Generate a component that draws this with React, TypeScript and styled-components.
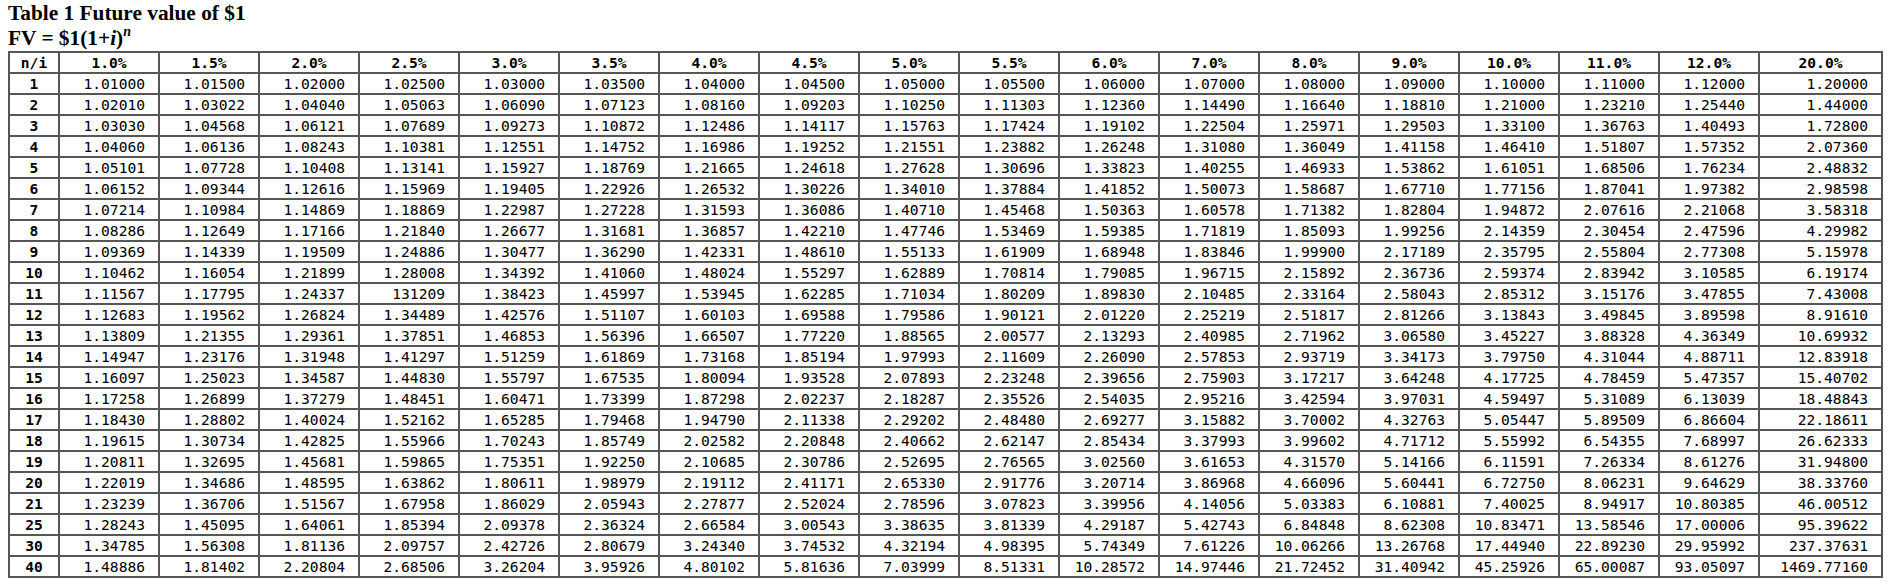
import React from "react";
import styled, { createGlobalStyle } from "styled-components";

const GlobalStyle = createGlobalStyle`
  html, body { margin: 0; padding: 0; background: #ffffff; }
  body { color: #000000; }
`;

const Page = styled.div`
  padding: 0 8px 0 8px;
`;

const Title = styled.div`
  font-family: "Liberation Serif", "Times New Roman", serif;
  font-weight: bold;
  font-size: 21.33px;
  line-height: 24px;
  padding-top: 1px;
`;

const Formula = styled.div`
  font-family: "Liberation Serif", "Times New Roman", serif;
  font-weight: bold;
  font-size: 21.33px;
  line-height: 26px;
  height: 26px;
`;

const Ital = styled.i`
  font-style: italic;
`;

const Sup = styled.sup`
  font-style: italic;
  font-size: 14px;
  line-height: 0;
  vertical-align: 9px;
`;

const Table = styled.table`
  border-collapse: collapse;
  table-layout: fixed;
  width: 1873px;
  font-family: "DejaVu Sans Mono", "Liberation Mono", monospace;
  font-size: 14.6px;
  color: #000000;
`;

const Col = styled.col<{ $w: number }>`
  width: ${(p) => p.$w}px;
`;

const HeadCell = styled.th`
  border: 2px solid #565656;
  font-weight: bold;
  text-align: center;
  padding: 0;
  height: 19px;
  line-height: 19px;
  white-space: nowrap;
`;

const RowHead = styled.td`
  border: 2px solid #565656;
  font-weight: bold;
  text-align: center;
  padding: 0;
  height: 19px;
  line-height: 19px;
`;

const Cell = styled.td`
  border: 2px solid #565656;
  text-align: right;
  padding: 0 13px 0 0;
  height: 19px;
  line-height: 19px;
  white-space: nowrap;
`;

const headers = [
  "1.0%", "1.5%", "2.0%", "2.5%", "3.0%", "3.5%", "4.0%", "4.5%", "5.0%",
  "5.5%", "6.0%", "7.0%", "8.0%", "9.0%", "10.0%", "11.0%", "12.0%", "20.0%",
];

const rows: [string, string][] = [
  ["1", "1.01000 1.01500 1.02000 1.02500 1.03000 1.03500 1.04000 1.04500 1.05000 1.05500 1.06000 1.07000 1.08000 1.09000 1.10000 1.11000 1.12000 1.20000"],
  ["2", "1.02010 1.03022 1.04040 1.05063 1.06090 1.07123 1.08160 1.09203 1.10250 1.11303 1.12360 1.14490 1.16640 1.18810 1.21000 1.23210 1.25440 1.44000"],
  ["3", "1.03030 1.04568 1.06121 1.07689 1.09273 1.10872 1.12486 1.14117 1.15763 1.17424 1.19102 1.22504 1.25971 1.29503 1.33100 1.36763 1.40493 1.72800"],
  ["4", "1.04060 1.06136 1.08243 1.10381 1.12551 1.14752 1.16986 1.19252 1.21551 1.23882 1.26248 1.31080 1.36049 1.41158 1.46410 1.51807 1.57352 2.07360"],
  ["5", "1.05101 1.07728 1.10408 1.13141 1.15927 1.18769 1.21665 1.24618 1.27628 1.30696 1.33823 1.40255 1.46933 1.53862 1.61051 1.68506 1.76234 2.48832"],
  ["6", "1.06152 1.09344 1.12616 1.15969 1.19405 1.22926 1.26532 1.30226 1.34010 1.37884 1.41852 1.50073 1.58687 1.67710 1.77156 1.87041 1.97382 2.98598"],
  ["7", "1.07214 1.10984 1.14869 1.18869 1.22987 1.27228 1.31593 1.36086 1.40710 1.45468 1.50363 1.60578 1.71382 1.82804 1.94872 2.07616 2.21068 3.58318"],
  ["8", "1.08286 1.12649 1.17166 1.21840 1.26677 1.31681 1.36857 1.42210 1.47746 1.53469 1.59385 1.71819 1.85093 1.99256 2.14359 2.30454 2.47596 4.29982"],
  ["9", "1.09369 1.14339 1.19509 1.24886 1.30477 1.36290 1.42331 1.48610 1.55133 1.61909 1.68948 1.83846 1.99900 2.17189 2.35795 2.55804 2.77308 5.15978"],
  ["10", "1.10462 1.16054 1.21899 1.28008 1.34392 1.41060 1.48024 1.55297 1.62889 1.70814 1.79085 1.96715 2.15892 2.36736 2.59374 2.83942 3.10585 6.19174"],
  ["11", "1.11567 1.17795 1.24337 131209 1.38423 1.45997 1.53945 1.62285 1.71034 1.80209 1.89830 2.10485 2.33164 2.58043 2.85312 3.15176 3.47855 7.43008"],
  ["12", "1.12683 1.19562 1.26824 1.34489 1.42576 1.51107 1.60103 1.69588 1.79586 1.90121 2.01220 2.25219 2.51817 2.81266 3.13843 3.49845 3.89598 8.91610"],
  ["13", "1.13809 1.21355 1.29361 1.37851 1.46853 1.56396 1.66507 1.77220 1.88565 2.00577 2.13293 2.40985 2.71962 3.06580 3.45227 3.88328 4.36349 10.69932"],
  ["14", "1.14947 1.23176 1.31948 1.41297 1.51259 1.61869 1.73168 1.85194 1.97993 2.11609 2.26090 2.57853 2.93719 3.34173 3.79750 4.31044 4.88711 12.83918"],
  ["15", "1.16097 1.25023 1.34587 1.44830 1.55797 1.67535 1.80094 1.93528 2.07893 2.23248 2.39656 2.75903 3.17217 3.64248 4.17725 4.78459 5.47357 15.40702"],
  ["16", "1.17258 1.26899 1.37279 1.48451 1.60471 1.73399 1.87298 2.02237 2.18287 2.35526 2.54035 2.95216 3.42594 3.97031 4.59497 5.31089 6.13039 18.48843"],
  ["17", "1.18430 1.28802 1.40024 1.52162 1.65285 1.79468 1.94790 2.11338 2.29202 2.48480 2.69277 3.15882 3.70002 4.32763 5.05447 5.89509 6.86604 22.18611"],
  ["18", "1.19615 1.30734 1.42825 1.55966 1.70243 1.85749 2.02582 2.20848 2.40662 2.62147 2.85434 3.37993 3.99602 4.71712 5.55992 6.54355 7.68997 26.62333"],
  ["19", "1.20811 1.32695 1.45681 1.59865 1.75351 1.92250 2.10685 2.30786 2.52695 2.76565 3.02560 3.61653 4.31570 5.14166 6.11591 7.26334 8.61276 31.94800"],
  ["20", "1.22019 1.34686 1.48595 1.63862 1.80611 1.98979 2.19112 2.41171 2.65330 2.91776 3.20714 3.86968 4.66096 5.60441 6.72750 8.06231 9.64629 38.33760"],
  ["21", "1.23239 1.36706 1.51567 1.67958 1.86029 2.05943 2.27877 2.52024 2.78596 3.07823 3.39956 4.14056 5.03383 6.10881 7.40025 8.94917 10.80385 46.00512"],
  ["25", "1.28243 1.45095 1.64061 1.85394 2.09378 2.36324 2.66584 3.00543 3.38635 3.81339 4.29187 5.42743 6.84848 8.62308 10.83471 13.58546 17.00006 95.39622"],
  ["30", "1.34785 1.56308 1.81136 2.09757 2.42726 2.80679 3.24340 3.74532 4.32194 4.98395 5.74349 7.61226 10.06266 13.26768 17.44940 22.89230 29.95992 237.37631"],
  ["40", "1.48886 1.81402 2.20804 2.68506 3.26204 3.95926 4.80102 5.81636 7.03999 8.51331 10.28572 14.97446 21.72452 31.40942 45.25926 65.00087 93.05097 1469.77160"],
];

const colWidths = [50, ...Array(17).fill(100), 123];

export default function App() {
  return (
    <>
      <GlobalStyle />
      <Page>
        <Title>Table 1 Future value of $1</Title>
        <Formula>
          FV = $1(1+<Ital>i</Ital>)<Sup>n</Sup>
        </Formula>
        <Table>
          <colgroup>
            {colWidths.map((w, i) => (
              <Col key={i} $w={w} />
            ))}
          </colgroup>
          <thead>
            <tr>
              <HeadCell>n/i</HeadCell>
              {headers.map((h) => (
                <HeadCell key={h}>{h}</HeadCell>
              ))}
            </tr>
          </thead>
          <tbody>
            {rows.map(([n, vals]) => (
              <tr key={n}>
                <RowHead>{n}</RowHead>
                {vals.split(" ").map((v, i) => (
                  <Cell key={i}>{v}</Cell>
                ))}
              </tr>
            ))}
          </tbody>
        </Table>
      </Page>
    </>
  );
}
